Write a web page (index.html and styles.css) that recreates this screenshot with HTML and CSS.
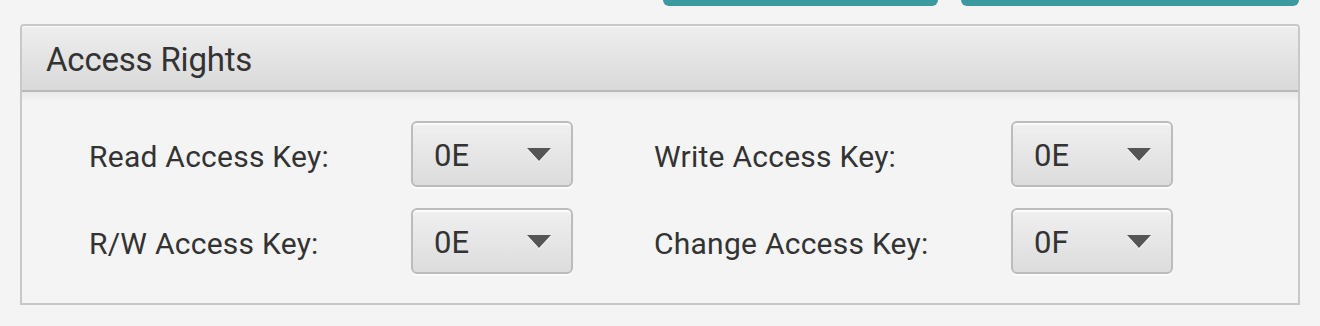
FILE: index.html
```html
<!DOCTYPE html>
<html>
<head>
<meta charset="utf-8">
<link rel="stylesheet" href="styles.css">
</head>
<body>
<div class="top-buttons">
  <div class="btn btn-a"></div>
  <div class="btn btn-b"></div>
</div>
<section class="panel">
  <header class="panel-header"><span class="title">Access Rights</span></header>
  <div class="panel-body">
    <div class="grid">
      <div class="label">Read Access Key:</div>
      <div class="combo"><span class="value">0E</span><span class="arrow"></span></div>
      <div class="label second">Write Access Key:</div>
      <div class="combo"><span class="value">0E</span><span class="arrow"></span></div>
      <div class="label">R/W Access Key:</div>
      <div class="combo"><span class="value">0E</span><span class="arrow"></span></div>
      <div class="label second">Change Access Key:</div>
      <div class="combo"><span class="value">0F</span><span class="arrow"></span></div>
    </div>
  </div>
</section>
</body>
</html>
```
FILE: styles.css
```css
html, body {
  margin: 0;
  padding: 0;
  background: #f4f4f4;
  font-family: Roboto, "Liberation Sans", sans-serif;
  color: #333333;
}
.top-buttons {
  display: flex;
  justify-content: flex-end;
  gap: 23px;
  padding-right: 21px;
  height: 6px;
}
.btn {
  height: 6px;
  background: #3a9a9f;
  border-radius: 0 0 9px 9px;
}
.btn-a { width: 275px; }
.btn-b { width: 338px; }
.panel {
  margin: 18px 20px 0 20px;
  width: 1276px;
  height: 277px;
  border: 2px solid #c8c8c8;
  border-radius: 4px 4px 0 0;
  display: flex;
  flex-direction: column;
  background: #f4f4f4;
}
.panel-header {
  height: 63px;
  border-top: 1px solid #fafafa;
  border-bottom: 2px solid #b9b9b9;
  background: linear-gradient(#eeeeee, #d9d9d9);
  border-radius: 3px 3px 0 0;
  display: flex;
  align-items: center;
  padding-left: 24px;
}
.title {
  font-size: 33px;
  letter-spacing: -0.2px;
  padding-top: 2px;
}
.panel-body {
  flex: 1;
  background: linear-gradient(#e8e8e8 0px, #f4f4f4 9px);
  padding: 29px 0 0 67px;
}
.grid {
  display: grid;
  grid-template-columns: 322px 162px 438px 162px;
  grid-auto-rows: 66px;
  row-gap: 21px;
  align-items: center;
}
.label {
  font-size: 30px;
  letter-spacing: 0.25px;
  padding-top: 4px;
}
.label.second {
  padding-left: 81px;
}
.combo {
  box-sizing: border-box;
  height: 66px;
  border: 2px solid #bcbcbc;
  border-radius: 6px;
  background: linear-gradient(#f0f0f0, #dcdcdc);
  box-shadow: inset 0 2px 0 #fbfbfb, 0 2px 0 #fbfbfb;
  display: flex;
  align-items: center;
  justify-content: space-between;
  padding: 0 20px 0 21px;
}
.value {
  font-size: 31px;
  padding-top: 2px;
}
.arrow {
  width: 0;
  height: 0;
  border-left: 12px solid transparent;
  border-right: 12px solid transparent;
  border-top: 13px solid #555555;
  filter: drop-shadow(0 1px 0 #ffffff);
  margin-top: 1px;
}
```
